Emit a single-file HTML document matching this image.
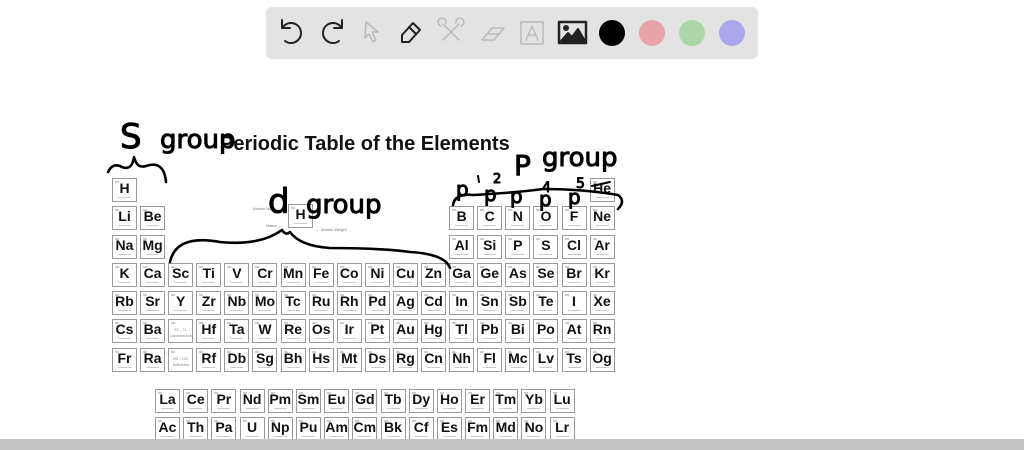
<!DOCTYPE html>
<html><head><meta charset="utf-8"><style>
body{margin:0;width:1024px;height:450px;background:#fff;position:relative;overflow:hidden;font-family:"Liberation Sans",Arial,sans-serif}
.tb{position:absolute;left:266px;top:7px;width:492px;height:52px;background:#e3e3e3;border-radius:6px}
.g{position:absolute;display:grid;grid-template-columns:repeat(18,28.1px);grid-auto-rows:28.3px}
.g2{grid-template-columns:repeat(15,28.2px)}
.g div{width:25px;height:24px;border:1px solid #9a9a9a;box-sizing:border-box;position:relative;text-align:center;font-weight:bold;font-size:14px;line-height:19px;color:#111;background:#fff;overflow:hidden}
.g div:after{content:"";position:absolute;left:5px;right:5px;top:18px;height:3px;border-top:1px solid #ccc;border-bottom:1px solid #ccc}
.g div:before{content:"";position:absolute;left:2px;top:2px;width:4px;height:2px;background:#ccc}
.g span{width:25px;height:24px}
.g div.s{font-size:4px;font-weight:normal;color:#888;line-height:6px;padding-top:7px}
.g div.s:after{display:none}
.t{position:absolute;left:220px;top:133px;font-size:20px;font-weight:bold;color:#111}
.sb{position:absolute;left:0;top:439px;width:1024px;height:11px;background:#c4c4c4}
svg text{stroke:#000;stroke-width:1}
</style></head><body>
<div class="tb"></div>
<svg style="position:absolute;left:0;top:0" width="1024" height="70" fill="none" stroke="#222" stroke-width="2" stroke-linecap="round" stroke-linejoin="round">
<path d="M283 27 A10 10 0 1 1 285 41 M282 20 v8 h8"/>
<path d="M341 27 A10 10 0 1 0 339 41 M342 20 v8 h-8"/>
<path d="M366 22 l12 10 h-6 l4 8 -3 2 -4 -8 -4 4 z" stroke="#bbb" stroke-width="1.5"/>
<path d="M402 42 v-7 l11 -12 7 7 -11 12 z M409 27 l7 7"/>
<path d="M443 24 l16 16 M459 24 l-16 16 M441 26 a4 4 0 1 1 5 -3 M461 26 a4 4 0 1 0 -5 -3" stroke="#bbb" stroke-width="1.5"/>
<path d="M482 40 l10 -12 h12 l-10 12 z M487 34 h12" stroke="#bbb" stroke-width="1.5"/>
<rect x="521" y="22" width="22" height="22" stroke="#bbb" stroke-width="1.5"/><path d="M526 40 l6 -14 6 14 M528 35 h8" stroke="#bbb" stroke-width="1.5"/>
<rect x="559" y="22" width="27" height="21" stroke-width="2.5"/><path d="M561 41 l7 -8 4 4 6 -8 7 12 z" fill="#222"/><circle cx="566" cy="28" r="2" fill="#222"/>
<circle cx="612" cy="33" r="13" fill="#000" stroke="none"/>
<circle cx="652" cy="33" r="13" fill="#e8a4aa" stroke="none"/>
<circle cx="692" cy="33" r="13" fill="#acd6a7" stroke="none"/>
<circle cx="732" cy="33" r="13" fill="#aaa8ec" stroke="none"/>
</svg>
<div class="t">Periodic Table of the Elements</div>
<div class="g" style="left:112px;top:178px">
<div>H</div><span></span><span></span><span></span><span></span><span></span><span></span><span></span><span></span><span></span><span></span><span></span><span></span><span></span><span></span><span></span><span></span><div>He</div>
<div>Li</div><div>Be</div><span></span><span></span><span></span><span></span><span></span><span></span><span></span><span></span><span></span><span></span><div>B</div><div>C</div><div>N</div><div>O</div><div>F</div><div>Ne</div>
<div>Na</div><div>Mg</div><span></span><span></span><span></span><span></span><span></span><span></span><span></span><span></span><span></span><span></span><div>Al</div><div>Si</div><div>P</div><div>S</div><div>Cl</div><div>Ar</div>
<div>K</div><div>Ca</div><div>Sc</div><div>Ti</div><div>V</div><div>Cr</div><div>Mn</div><div>Fe</div><div>Co</div><div>Ni</div><div>Cu</div><div>Zn</div><div>Ga</div><div>Ge</div><div>As</div><div>Se</div><div>Br</div><div>Kr</div>
<div>Rb</div><div>Sr</div><div>Y</div><div>Zr</div><div>Nb</div><div>Mo</div><div>Tc</div><div>Ru</div><div>Rh</div><div>Pd</div><div>Ag</div><div>Cd</div><div>In</div><div>Sn</div><div>Sb</div><div>Te</div><div>I</div><div>Xe</div>
<div>Cs</div><div>Ba</div><div class="s">57 - 71 Lanthanides</div><div>Hf</div><div>Ta</div><div>W</div><div>Re</div><div>Os</div><div>Ir</div><div>Pt</div><div>Au</div><div>Hg</div><div>Tl</div><div>Pb</div><div>Bi</div><div>Po</div><div>At</div><div>Rn</div>
<div>Fr</div><div>Ra</div><div class="s">89 - 103 Actinides</div><div>Rf</div><div>Db</div><div>Sg</div><div>Bh</div><div>Hs</div><div>Mt</div><div>Ds</div><div>Rg</div><div>Cn</div><div>Nh</div><div>Fl</div><div>Mc</div><div>Lv</div><div>Ts</div><div>Og</div>
</div>
<div class="g g2" style="left:155px;top:389px">
<div>La</div><div>Ce</div><div>Pr</div><div>Nd</div><div>Pm</div><div>Sm</div><div>Eu</div><div>Gd</div><div>Tb</div><div>Dy</div><div>Ho</div><div>Er</div><div>Tm</div><div>Yb</div><div>Lu</div>
<div>Ac</div><div>Th</div><div>Pa</div><div>U</div><div>Np</div><div>Pu</div><div>Am</div><div>Cm</div><div>Bk</div><div>Cf</div><div>Es</div><div>Fm</div><div>Md</div><div>No</div><div>Lr</div>
</div>
<div class="g" style="left:288px;top:204px"><div>H</div></div>
<div style="position:absolute;left:253px;top:206px;font-size:4px;color:#777">Atomic No.</div>
<div style="position:absolute;left:266px;top:223px;font-size:4px;color:#777">Name →</div>
<div style="position:absolute;left:316px;top:227px;font-size:4px;color:#777">← Atomic Weight</div>
<div class="sb"></div>
<svg style="position:absolute;left:0;top:0" width="1024" height="450" fill="none" stroke="#000" stroke-width="2.6" stroke-linecap="round" stroke-linejoin="round">
<text x="120" y="148" font-family="DejaVu Sans" font-size="34" fill="#000">S</text>
<text x="160" y="148" font-family="DejaVu Sans" font-size="26" fill="#000">group</text>
<path d="M108 172 q5 -10 14 -5 q10 4 12 -10 q3 12 12 9 q18 -6 20 16"/>
<text x="268" y="213" font-family="DejaVu Sans" font-size="34" fill="#000">d</text>
<text x="306" y="213" font-family="DejaVu Sans" font-size="26" fill="#000">group</text>
<path d="M170 262 q6 -28 50 -20 q40 4 62 -12 q4 6 8 2 q10 14 40 16 q50 0 80 4 q35 2 40 16"/>
<text x="514" y="175" font-family="DejaVu Sans" font-size="28" fill="#000">P</text>
<text x="542" y="166" font-family="DejaVu Sans" font-size="26" fill="#000">group</text>
<path d="M453 205 q2 -12 20 -10 q40 -2 70 -6 q40 0 75 6 q8 6 0 14"/>
<text x="456" y="196" font-family="DejaVu Sans" font-size="20" fill="#000">p</text>
<text x="484" y="201" font-family="DejaVu Sans" font-size="20" fill="#000">p</text>
<text x="510" y="203" font-family="DejaVu Sans" font-size="20" fill="#000">p</text>
<text x="539" y="206" font-family="DejaVu Sans" font-size="20" fill="#000">p</text>
<text x="568" y="204" font-family="DejaVu Sans" font-size="20" fill="#000">p</text>
<text x="493" y="183" font-family="DejaVu Sans" font-size="13" fill="#000">2</text>
<text x="542" y="192" font-family="DejaVu Sans" font-size="14" fill="#000">4</text>
<text x="576" y="188" font-family="DejaVu Sans" font-size="14" fill="#000">5</text>
<path d="M478 176 l1 6 M592 186 l18 -4" stroke-width="2"/>
</svg>
</body></html>
